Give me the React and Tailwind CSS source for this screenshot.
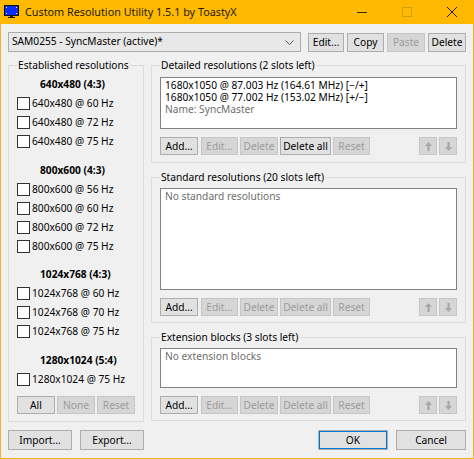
import React from 'react';

function Btn({ children, disabled, className = '' }) {
  return (
    <button
      type="button"
      className={`flex shrink-0 items-center justify-center border leading-none ${
        disabled
          ? 'bg-[#d6d6d6] border-[#c6c6c6] text-[#9c9c9c]'
          : 'bg-[#e1e1e1] border-[#adadad] text-black'
      } ${className}`}
    >
      {children}
    </button>
  );
}

function Arrow({ down }) {
  return (
    <svg width="7" height="9" viewBox="0 0 7 9" className={down ? 'rotate-180' : ''}>
      <path d="M3.5 0 L7 4 H4.6 V9 H2.4 V4 H0 Z" fill="#a6a6a6" />
    </svg>
  );
}

function ListGroup({ title, listH, pt, pb, textPt, canDeleteAll, children }) {
  return (
    <fieldset className={`border border-[#dcdcdc] px-[8px] ${pt} ${pb}`}>
      <legend className="whitespace-nowrap px-[1px] leading-[13px]">{title}</legend>
      <div className={`whitespace-nowrap border border-[#828282] bg-white pl-[4px] leading-[12px] ${listH} ${textPt}`}>
        {children}
      </div>
      <div className="mt-[8px] flex h-[18px]">
        <Btn className="w-[38px]">Add...</Btn>
        <Btn disabled className="ml-[3px] w-[37px]">Edit...</Btn>
        <Btn disabled className="ml-[2px] w-[38px]">Delete</Btn>
        <Btn disabled={!canDeleteAll} className="ml-[2px] w-[51px]">Delete all</Btn>
        <Btn disabled className="ml-[2px] w-[37px]">Reset</Btn>
        <div className="flex-1" />
        <Btn disabled className="w-[18px]"><Arrow /></Btn>
        <Btn disabled className="ml-[2px] w-[18px]"><Arrow down /></Btn>
      </div>
    </fieldset>
  );
}

function Check({ label }) {
  return (
    <div className="flex h-[19px] items-center gap-[2px] whitespace-nowrap">
      <div className="h-[13px] w-[13px] shrink-0 border border-[#333333] bg-white" />
      <span>{label}</span>
    </div>
  );
}

function Block({ heading, items, mt }) {
  return (
    <div className={mt}>
      <div className="flex h-[18px] items-center whitespace-nowrap pl-[23px] font-bold">{heading}</div>
      {items.map((it) => (
        <Check key={it} label={it} />
      ))}
    </div>
  );
}

export default function App() {
  return (
    <div className="flex h-[459px] w-[474px] flex-col overflow-hidden bg-[#f0f0f0] font-['Noto_Sans',sans-serif] text-[10.2px] text-black">
      {/* title bar */}
      <div className="flex h-[24px] shrink-0 items-center bg-[#ffb900]">
        <svg width="16" height="14" viewBox="0 0 16 14" className="ml-[4px]">
          <rect x="0.5" y="0.5" width="14" height="10" fill="#0a2cff" stroke="#111" />
          <rect x="2" y="2" width="1" height="1" fill="#fff" />
          <rect x="12" y="2" width="1" height="1" fill="#fff" />
          <rect x="2" y="8" width="1" height="1" fill="#fff" />
          <rect x="12" y="8" width="1" height="1" fill="#fff" />
          <rect x="6" y="11" width="3" height="1" fill="#111" />
          <rect x="4" y="12" width="7" height="1" fill="#111" />
        </svg>
        <span className="ml-[5px] text-[10.8px] text-[#231c00]">Custom Resolution Utility 1.5.1 by ToastyX</span>
        <div className="flex-1" />
        <div className="flex h-full w-[45px] items-center justify-center">
          <div className="h-px w-[10px] bg-[#3a2c00]" />
        </div>
        <div className="flex h-full w-[45px] items-center justify-center">
          <div className="h-[10px] w-[10px] border border-[#d69f10]" />
        </div>
        <div className="flex h-full w-[45px] items-center justify-center">
          <svg width="10" height="10" viewBox="0 0 10 10">
            <path d="M0 0 L10 10 M10 0 L0 10" stroke="#2a2000" strokeWidth="1" />
          </svg>
        </div>
      </div>

      {/* body */}
      <div className="flex flex-1 flex-col border-x border-b border-[#f2b320] pl-[7px] pr-[7px]">
        <div className="mt-[8px] flex h-[20px] items-center">
          <div className="flex h-[20px] w-[294px] items-center border border-[#adadad] bg-[#e8e8e8] pl-[3px]">
            <span className="flex-1">SAM0255 - SyncMaster (active)*</span>
            <svg width="9" height="5" viewBox="0 0 9 5" className="mr-[6px]">
              <path d="M0.5 0.5 L4.5 4.5 L8.5 0.5" fill="none" stroke="#555" />
            </svg>
          </div>
          <Btn className="ml-[7px] h-[19px] w-[36px]">Edit...</Btn>
          <Btn className="ml-[3px] h-[19px] w-[37px]">Copy</Btn>
          <Btn disabled className="ml-[3px] h-[19px] w-[38px]">Paste</Btn>
          <Btn className="ml-[3px] h-[19px] w-[38px]">Delete</Btn>
        </div>

        <div className="mt-[7px] flex items-start gap-[7px]">
          {/* established */}
          <fieldset className="w-[136px] border border-[#dcdcdc] px-[8px] pt-[4px] pb-[7px]">
            <legend className="whitespace-nowrap px-[1px] leading-[13px]">Established resolutions</legend>
            <Block heading="640x480 (4:3)" items={['640x480 @ 60 Hz', '640x480 @ 72 Hz', '640x480 @ 75 Hz']} mt="" />
            <Block
              heading="800x600 (4:3)"
              items={['800x600 @ 56 Hz', '800x600 @ 60 Hz', '800x600 @ 72 Hz', '800x600 @ 75 Hz']}
              mt="mt-[11px]"
            />
            <Block heading="1024x768 (4:3)" items={['1024x768 @ 60 Hz', '1024x768 @ 70 Hz', '1024x768 @ 75 Hz']} mt="mt-[10px]" />
            <Block heading="1280x1024 (5:4)" items={['1280x1024 @ 75 Hz']} mt="mt-[11px]" />
            <div className="mt-[7px] flex h-[18px] gap-[2px]">
              <Btn className="w-[38px]">All</Btn>
              <Btn disabled className="w-[38px]">None</Btn>
              <Btn disabled className="w-[38px]">Reset</Btn>
            </div>
          </fieldset>

          {/* right column */}
          <div className="flex w-[315px] flex-col">
            <ListGroup title="Detailed resolutions (2 slots left)" listH="h-[52px]" pt="pt-[5px]" pb="pb-[7px]" textPt="pt-[1px]" canDeleteAll>
              <div>1680x1050 @ 87.003 Hz (164.61 MHz) [−/+]</div>
              <div>1680x1050 @ 77.002 Hz (153.02 MHz) [+/−]</div>
              <div className="text-[#6d6d6d]">Name: SyncMaster</div>
            </ListGroup>
            <div className="mt-[8px]">
              <ListGroup title="Standard resolutions (20 slots left)" listH="h-[102px]" pt="pt-[4px]" pb="pb-[6px]" textPt="pt-[1px]">
                <div className="text-[#6d6d6d]">No standard resolutions</div>
              </ListGroup>
            </div>
            <div className="mt-[8px]">
              <ListGroup title="Extension blocks (3 slots left)" listH="h-[40px]" pt="pt-[4px]" pb="pb-[6px]" textPt="pt-[1px]">
                <div className="text-[#6d6d6d]">No extension blocks</div>
              </ListGroup>
            </div>
          </div>
        </div>

        <div className="mt-[8px] flex h-[20px]">
          <Btn className="w-[64px]">Import...</Btn>
          <Btn className="ml-[8px] w-[64px]">Export...</Btn>
          <div className="flex-1" />
          <Btn className="w-[70px] border-[#0078d7] shadow-[inset_0_0_0_1px_#0078d7]">OK</Btn>
          <Btn className="ml-[8px] w-[70px]">Cancel</Btn>
        </div>
      </div>
    </div>
  );
}
